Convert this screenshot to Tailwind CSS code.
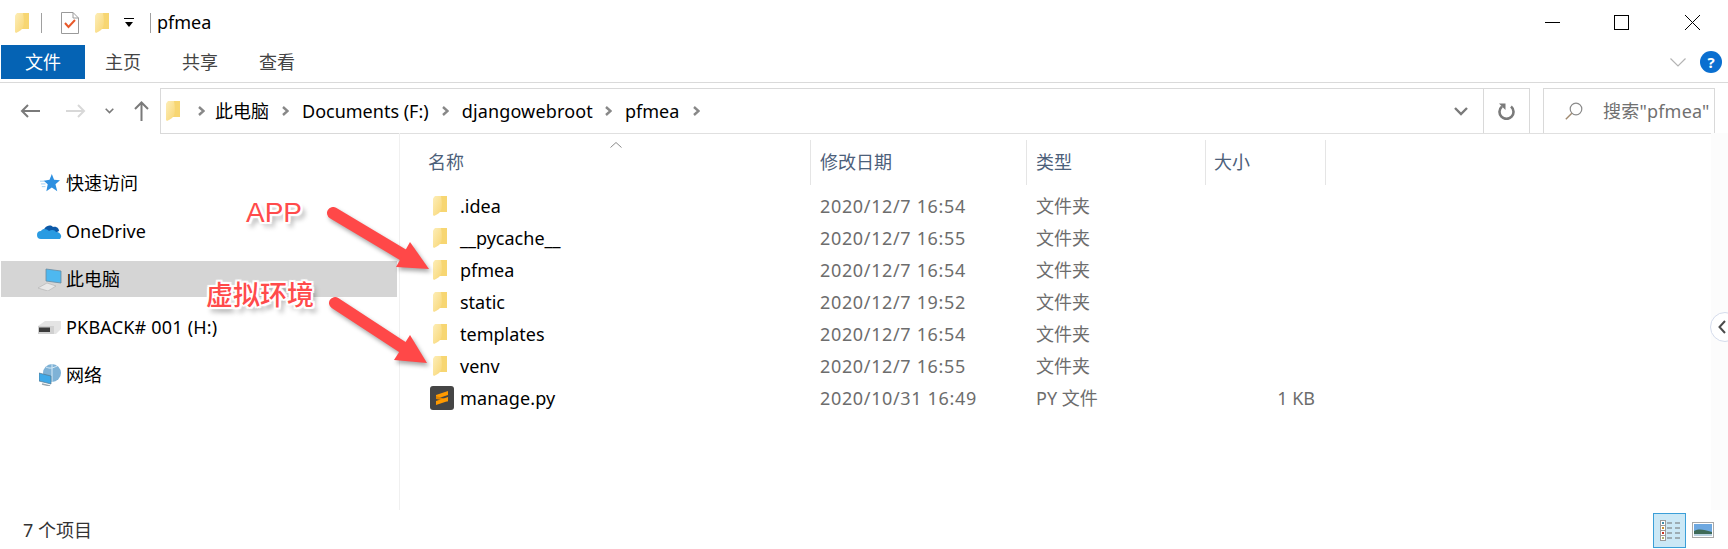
<!DOCTYPE html>
<html>
  <head>
    <script src="https://cdn.jsdelivr.net/npm/@tailwindcss/browser@4"></script>
    <title>pfmea</title>
  </head>
  <body>
    <svg width="0" height="0" class="absolute">
      <defs>
        <linearGradient id="fg" x1="0" y1="0" x2="1" y2="1">
          <stop offset="0" stop-color="#fdeeb8" />
          <stop offset="1" stop-color="#f8d675" />
        </linearGradient>
        <symbol id="folder" viewBox="0 0 14 20">
          <path d="M2 0H14V16H5Z" fill="#f7d672" />
          <path d="M0 2.5L2 0H8C9 5 9 10 8.5 13C8 16 5 18 1 20L0 19Z" fill="url(#fg)" />
        </symbol>
      </defs>
    </svg>

    <div class="relative flex h-[549px] w-[1728px] flex-col overflow-hidden bg-white font-['Noto_Sans','Noto_Sans_CJK_SC',sans-serif] text-[18px] text-black">
      <!-- title bar -->
      <div class="flex h-[45px] items-center">
        <svg class="ml-[15px] h-[20px] w-[14px]"><use href="#folder" /></svg>
        <div class="ml-[12px] h-[20px] w-px bg-[#a0a0a0]"></div>
        <svg class="ml-[19px] h-[22px] w-[18px]" viewBox="0 0 18 22">
          <path d="M.5.5H12L17.5 6V21.5H.5Z" fill="#fff" stroke="#9a9a9a" />
          <path d="M12 .5V6H17.5" fill="none" stroke="#9a9a9a" />
          <path d="M4 11L7.5 15L14 8" fill="none" stroke="#e8592a" stroke-width="2" />
        </svg>
        <svg class="ml-[16px] h-[20px] w-[14px]"><use href="#folder" /></svg>
        <svg class="ml-[15px] h-[10px] w-[10px]" viewBox="0 0 10 10">
          <path d="M0 .5H10" stroke="#000" />
          <path d="M1 4H9L5 9Z" fill="#000" />
        </svg>
        <div class="ml-[16px] h-[20px] w-px bg-[#a0a0a0]"></div>
        <span class="ml-[6px]">pfmea</span>
        <div class="ml-auto flex items-center">
          <div class="h-px w-[15px] bg-black"></div>
          <div class="ml-[54px] h-[15px] w-[15px] border border-black"></div>
          <svg class="ml-[56px] mr-[28px] h-[15px] w-[15px]" viewBox="0 0 15 15">
            <path d="M0 0L15 15M15 0L0 15" stroke="#000" />
          </svg>
        </div>
      </div>

      <!-- ribbon tabs -->
      <div class="flex h-[38px] items-start border-b border-[#dadada] text-[#444]">
        <div class="ml-px flex h-[34px] w-[84px] items-center justify-center bg-[#0563b4] text-white">文件</div>
        <div class="ml-[20px] flex h-[34px] items-center">主页</div>
        <div class="ml-[41px] flex h-[34px] items-center">共享</div>
        <div class="ml-[41px] flex h-[34px] items-center">查看</div>
        <div class="ml-auto flex h-[34px] items-center">
          <svg class="h-[9px] w-[16px]" viewBox="0 0 16 9">
            <path d="M.5.5L8 8L15.5.5" fill="none" stroke="#b4b4b4" stroke-width="1.2" />
          </svg>
          <div class="ml-[14px] mr-[6px] flex h-[22px] w-[22px] items-center justify-center rounded-full bg-[#0a6fd0] text-[15px] font-bold text-white">?</div>
        </div>
      </div>

      <!-- nav row -->
      <div class="flex h-[50px] items-start pt-[5px]">
        <div class="flex h-[46px] w-[160px] items-center">
          <svg class="ml-[20px] h-[14px] w-[20px]" viewBox="0 0 20 14">
            <path d="M20 7H2M8 1L2 7L8 13" fill="none" stroke="#7a7a7a" stroke-width="2" />
          </svg>
          <svg class="ml-[26px] h-[14px] w-[20px]" viewBox="0 0 20 14">
            <path d="M0 7H18M12 1L18 7L12 13" fill="none" stroke="#d8d8d8" stroke-width="2" />
          </svg>
          <svg class="ml-[19px] h-[6px] w-[9px]" viewBox="0 0 9 6">
            <path d="M.7.7L4.5 4.5L8.3.7" fill="none" stroke="#7a7a7a" stroke-width="1.6" />
          </svg>
          <svg class="ml-[20px] h-[20px] w-[15px]" viewBox="0 0 15 20">
            <path d="M7.5 20V2M1 8L7.5 1.5L14 8" fill="none" stroke="#7a7a7a" stroke-width="2" />
          </svg>
        </div>
        <div class="flex h-[46px] w-[1370px] items-center border border-[#d9d9d9]">
          <svg class="ml-[5px] h-[20px] w-[14px]"><use href="#folder" /></svg>
          <svg class="ml-[18px] h-[10px] w-[7px]" viewBox="0 0 7 10"><path d="M1 1L5.5 5L1 9" fill="none" stroke="#888" stroke-width="2.4" /></svg>
          <span class="ml-[10px]">此电脑</span>
          <svg class="ml-[13px] h-[10px] w-[7px]" viewBox="0 0 7 10"><path d="M1 1L5.5 5L1 9" fill="none" stroke="#888" stroke-width="2.4" /></svg>
          <span class="ml-[13px]">Documents (F:)</span>
          <svg class="ml-[13px] h-[10px] w-[7px]" viewBox="0 0 7 10"><path d="M1 1L5.5 5L1 9" fill="none" stroke="#888" stroke-width="2.4" /></svg>
          <span class="ml-[13px] tracking-[0.15px]">djangowebroot</span>
          <svg class="ml-[12px] h-[10px] w-[7px]" viewBox="0 0 7 10"><path d="M1 1L5.5 5L1 9" fill="none" stroke="#888" stroke-width="2.4" /></svg>
          <span class="ml-[13px]">pfmea</span>
          <svg class="ml-[14px] h-[10px] w-[7px]" viewBox="0 0 7 10"><path d="M1 1L5.5 5L1 9" fill="none" stroke="#888" stroke-width="2.4" /></svg>
          <div class="ml-auto flex h-full items-center">
            <svg class="mr-[15px] h-[9px] w-[14px]" viewBox="0 0 14 9"><path d="M1 1L7 7L13 1" fill="none" stroke="#7a7a7a" stroke-width="2.4" /></svg>
            <div class="flex h-full w-[46px] items-center justify-center border-l border-[#d9d9d9]">
              <svg class="h-[18px] w-[17px]" viewBox="0 0 17 18">
                <path d="M4 4.5A7 7 0 1 0 13 4.5" fill="none" stroke="#7a7a7a" stroke-width="2.6" />
                <path d="M1 1.5H7.5V8Z" fill="#7a7a7a" />
              </svg>
            </div>
          </div>
        </div>
        <div class="ml-[13px] flex h-[46px] w-[172px] items-center overflow-hidden whitespace-nowrap border border-[#d9d9d9] text-[#707070]">
          <svg class="ml-[21px] h-[18px] w-[18px]" viewBox="0 0 18 18">
            <circle cx="11" cy="7" r="5.8" fill="none" stroke="#8a8a8a" stroke-width="1.2" />
            <path d="M6.8 11.2L.8 17.2" stroke="#a08a70" stroke-width="1.4" />
          </svg>
          <span class="ml-[20px] tracking-[0.2px]">搜索"pfmea"</span>
        </div>
      </div>

      <!-- main -->
      <div class="flex min-h-0 flex-1">
        <!-- sidebar -->
        <div class="flex w-[400px] flex-col border-r border-[#f0f0f0] pt-[32px] pl-px">
          <div class="flex h-[36px] w-[396px] items-center pl-[39px]">
            <svg class="h-[20px] w-[20px]" viewBox="0 0 22 20">
              <path d="M13 0L15.5 6.5L22 7L17 11.5L19 19L13 15L7 19L8.5 11.5L4 7.5L10.5 6.5Z" fill="#2d8fe0" />
              <path d="M0 8H5M1 11H6M2 14H6" stroke="#9ccdf2" />
            </svg>
            <span class="ml-[6px]">快速访问</span>
          </div>
          <div class="mt-[12px] flex h-[36px] w-[396px] items-center pl-[36px]">
            <svg class="h-[16px] w-[25px]" viewBox="0 0 25 16">
              <path d="M6 12C5 5 12 0 16 4C20 3 22 6 22 8L10 14Z" fill="#0c59a8" />
              <path d="M4 16A4 4 0 0 1 4 8C6 5 10 6 12 8C15 6 18 7 19 9C23 9 26 13 23 16Z" fill="#2a9be2" />
            </svg>
            <span class="ml-[4px]">OneDrive</span>
          </div>
          <div class="mt-[12px] flex h-[36px] w-[396px] items-center bg-[#d5d5d5] pl-[37px]">
            <svg class="h-[24px] w-[24px]" viewBox="0 0 24 24">
              <path d="M8 2L23 4V16L8 14Z" fill="#4eb8f0" stroke="#6a8aa0" stroke-width=".8" />
              <path d="M0 21L9 16L18 19L10 24Z" fill="#e8e8e8" stroke="#b0b0b0" stroke-width=".6" />
            </svg>
            <span class="ml-[4px]">此电脑</span>
          </div>
          <div class="mt-[12px] flex h-[36px] w-[396px] items-center pl-[37px]">
            <svg class="h-[14px] w-[23px]" viewBox="0 0 23 14">
              <path d="M0 6L7 1H23V9L18 14H0Z" fill="#e4e4e4" />
              <path d="M0 6H16V14H0Z" fill="#d0d0d0" />
              <path d="M1 7.5H12V12H1Z" fill="#3c3c3c" />
            </svg>
            <span class="ml-[5px] tracking-[0.2px]">PKBACK# 001 (H:)</span>
          </div>
          <div class="mt-[12px] flex h-[36px] w-[396px] items-center pl-[38px]">
            <svg class="h-[22px] w-[22px]" viewBox="0 0 22 22">
              <circle cx="13" cy="9" r="9" fill="#7fb2d6" />
              <path d="M7 3C11 5 14 4 18 2M13 0V18" stroke="#d9ecf8" fill="none" />
              <path d="M0 9L12 12V20L0 17Z" fill="#3fa9e8" stroke="#56798f" stroke-width=".7" />
              <path d="M3 20L11 22" stroke="#9aa7b0" stroke-width="1.4" />
            </svg>
            <span class="ml-[5px]">网络</span>
          </div>
        </div>

        <!-- file list -->
        <div class="flex min-w-0 flex-1 flex-col">
          <div class="flex h-[57px] border-t border-[#e0e0e0] pt-[6px] text-[#4c607a]">
            <div class="relative w-[410px] pl-[28px] leading-[45px]">
              <svg class="absolute left-[210px] top-[2px] h-[6px] w-[12px]" viewBox="0 0 12 6"><path d="M.5 5.5L6 .5L11.5 5.5" fill="none" stroke="#8a8a8a" /></svg>
              名称
            </div>
            <div class="h-[45px] w-[216px] border-l border-[#e5e5e5] pl-[9px] leading-[45px]">修改日期</div>
            <div class="h-[45px] w-[179px] border-l border-[#e5e5e5] pl-[9px] leading-[45px]">类型</div>
            <div class="h-[45px] w-[121px] border-x border-[#e5e5e5] pl-[8px] leading-[45px]">大小</div>
          </div>
          <div class="flex h-[32px] items-center">
            <svg class="ml-[33px] h-[20px] w-[14px]"><use href="#folder" /></svg>
            <span class="ml-[13px] w-[360px]">.idea</span>
            <span class="w-[216px] tracking-[0.65px] text-[#6d6d6d]">2020/12/7 16:54</span>
            <span class="text-[#6d6d6d]">文件夹</span>
          </div>
          <div class="flex h-[32px] items-center">
            <svg class="ml-[33px] h-[20px] w-[14px]"><use href="#folder" /></svg>
            <span class="ml-[13px] w-[360px]">__pycache__</span>
            <span class="w-[216px] tracking-[0.65px] text-[#6d6d6d]">2020/12/7 16:55</span>
            <span class="text-[#6d6d6d]">文件夹</span>
          </div>
          <div class="flex h-[32px] items-center">
            <svg class="ml-[33px] h-[20px] w-[14px]"><use href="#folder" /></svg>
            <span class="ml-[13px] w-[360px]">pfmea</span>
            <span class="w-[216px] tracking-[0.65px] text-[#6d6d6d]">2020/12/7 16:54</span>
            <span class="text-[#6d6d6d]">文件夹</span>
          </div>
          <div class="flex h-[32px] items-center">
            <svg class="ml-[33px] h-[20px] w-[14px]"><use href="#folder" /></svg>
            <span class="ml-[13px] w-[360px]">static</span>
            <span class="w-[216px] tracking-[0.65px] text-[#6d6d6d]">2020/12/7 19:52</span>
            <span class="text-[#6d6d6d]">文件夹</span>
          </div>
          <div class="flex h-[32px] items-center">
            <svg class="ml-[33px] h-[20px] w-[14px]"><use href="#folder" /></svg>
            <span class="ml-[13px] w-[360px]">templates</span>
            <span class="w-[216px] tracking-[0.65px] text-[#6d6d6d]">2020/12/7 16:54</span>
            <span class="text-[#6d6d6d]">文件夹</span>
          </div>
          <div class="flex h-[32px] items-center">
            <svg class="ml-[33px] h-[20px] w-[14px]"><use href="#folder" /></svg>
            <span class="ml-[13px] w-[360px]">venv</span>
            <span class="w-[216px] tracking-[0.65px] text-[#6d6d6d]">2020/12/7 16:55</span>
            <span class="text-[#6d6d6d]">文件夹</span>
          </div>
          <div class="flex h-[32px] items-center">
            <svg class="ml-[30px] h-[24px] w-[24px]" viewBox="0 0 24 24">
              <rect width="24" height="24" rx="3" fill="#454545" />
              <path d="M6 9L18 5V9L6 13Z" fill="#ff9a00" />
              <path d="M6 10L18 14V15.5L6 13Z" fill="#e08400" />
              <path d="M6 15L18 11V15L6 19Z" fill="#ff9a00" />
            </svg>
            <span class="ml-[6px] w-[360px] tracking-[0.15px]">manage.py</span>
            <span class="w-[216px] tracking-[0.65px] text-[#6d6d6d]">2020/10/31 16:49</span>
            <span class="w-[179px] text-[#6d6d6d]">PY 文件</span>
            <span class="w-[100px] text-right text-[#6d6d6d]">1 KB</span>
          </div>
        </div>

        <!-- collapsed side pane -->
        <div class="w-[17px] bg-[#fcfcfc]"></div>
      </div>

      <!-- status bar -->
      <div class="flex h-[39px] items-center pt-px text-[#333]">
        <span class="ml-[23px]">7 个项目</span>
        <div class="ml-auto flex items-center">
          <div class="flex h-[35px] w-[33px] flex-col justify-center gap-[1px] border border-[#3b9fd8] bg-[#cbe8f6] pl-[6px]">
            <svg class="h-[21px] w-[21px]" viewBox="0 0 21 21">
              <rect x=".5" y=".5" width="5" height="20" fill="#fff" stroke="#9a9a9a" />
              <path d="M.5 5.5H5.5M.5 10.5H5.5M.5 15.5H5.5" stroke="#9a9a9a" />
              <rect x="2" y="2" width="2" height="2" fill="#3c8aa8" />
              <rect x="2" y="7" width="2" height="2" fill="#c89030" />
              <rect x="2" y="12" width="2" height="2" fill="#c83020" />
              <rect x="2" y="17" width="2" height="2" fill="#a8b070" />
              <path d="M7 3H12M15 3H20M7 8H12M15 8H20M7 13H12M15 13H20M7 18H12M15 18H20" stroke="#707070" />
            </svg>
          </div>
          <svg class="ml-[6px] mr-[14px] h-[16px] w-[22px]" viewBox="0 0 22 16">
            <rect x=".5" y=".5" width="21" height="15" fill="#fff" stroke="#a8a8a8" />
            <rect x="2" y="2" width="18" height="12" fill="#6ea8e0" />
            <path d="M2 9C8 6 12 8 20 10V14H2Z" fill="#3e6a58" />
            <path d="M2 12H20V14H2Z" fill="#b8d0e0" />
          </svg>
        </div>
      </div>

      <!-- side pane handle -->
      <div class="absolute left-[1710px] top-[312px] flex h-[30px] w-[30px] items-center rounded-full border border-[#d5dcec] bg-white pl-[7px]">
        <svg class="h-[14px] w-[8px]" viewBox="0 0 8 14"><path d="M7 1L1.5 7L7 13" fill="none" stroke="#4a4a4a" stroke-width="2" /></svg>
      </div>

      <!-- annotations -->
      <svg class="absolute left-0 top-0 h-[549px] w-[1728px] drop-shadow-[2px_3px_2px_rgba(0,0,0,0.35)]" viewBox="0 0 1728 549">
        <path d="M333 213L415 262" stroke="#ff4848" stroke-width="12" stroke-linecap="round" />
        <path d="M429 269L396 267L410 242Z" fill="#ff4848" />
        <path d="M335 303L413 354" stroke="#ff4848" stroke-width="12" stroke-linecap="round" />
        <path d="M427 363L394 360L410 335Z" fill="#ff4848" />
      </svg>
      <div class="absolute left-[246px] top-[197px] font-['Liberation_Sans',sans-serif] text-[28px] leading-[32px] text-[#ff4b4b] [text-shadow:2px_0_0_#fff,-2px_0_0_#fff,0_2px_0_#fff,0_-2px_0_#fff,2px_2px_1px_#fff,-2px_-2px_1px_#fff,2px_-2px_1px_#fff,-2px_2px_1px_#fff,4px_5px_5px_rgba(0,0,0,0.4)]">APP</div>
      <div class="absolute left-[206px] top-[277px] font-['Noto_Sans_CJK_SC',sans-serif] text-[27px] font-medium leading-[34px] text-[#ff4b4b] [text-shadow:2px_0_0_#fff,-2px_0_0_#fff,0_2px_0_#fff,0_-2px_0_#fff,2px_2px_1px_#fff,-2px_-2px_1px_#fff,2px_-2px_1px_#fff,-2px_2px_1px_#fff,4px_5px_5px_rgba(0,0,0,0.4)]">虚拟环境</div>
    </div>
  </body>
</html>
